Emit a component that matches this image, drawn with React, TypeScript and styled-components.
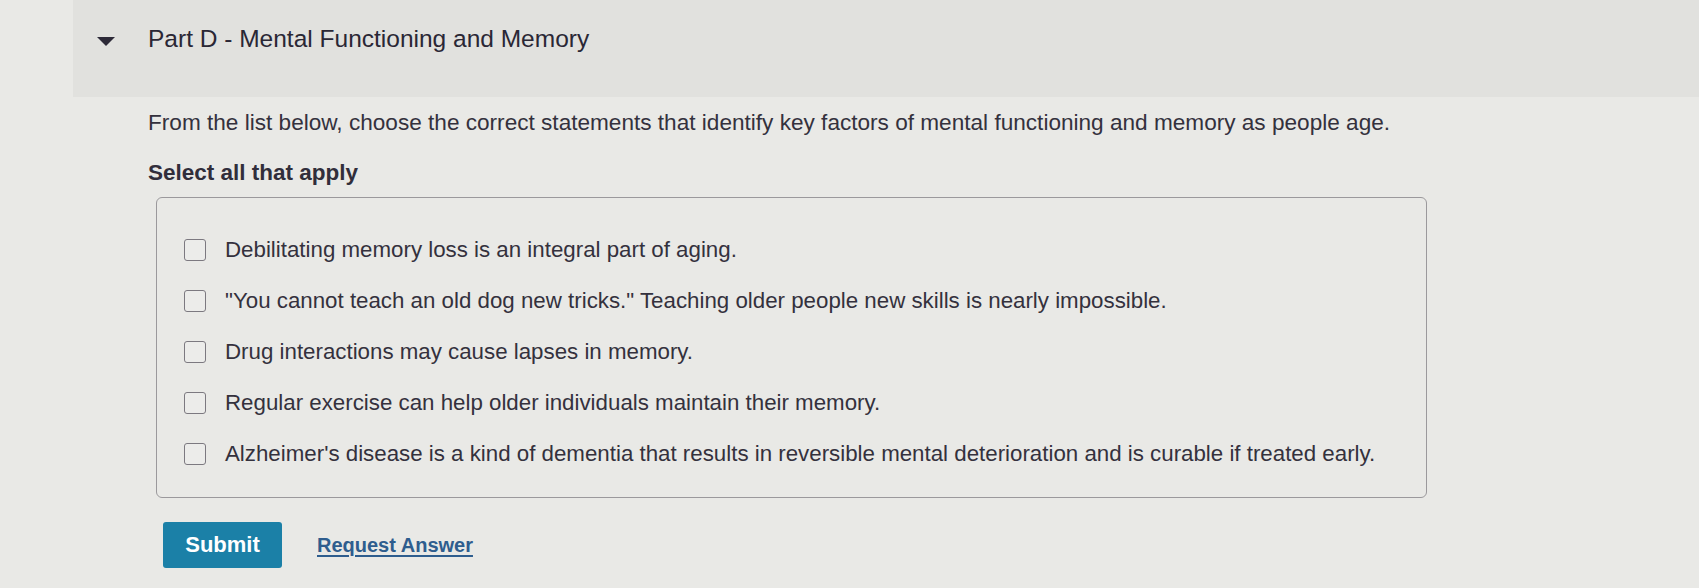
import React from 'react'
import styled, { createGlobalStyle } from 'styled-components'

const GlobalStyle = createGlobalStyle`
  html, body {
    margin: 0;
    padding: 0;
    background: #e9e9e6;
  }
  body {
    font-family: "Liberation Sans", Arial, Helvetica, sans-serif;
    color: #34313d;
  }
`

const Page = styled.div`
  width: 1699px;
  height: 588px;
  overflow: hidden;
`

const PartHeader = styled.div`
  margin-left: 73px;
  height: 97px;
  background: #e1e1de;
  display: flex;
  align-items: flex-start;
  padding: 25px 0 0 24px;
  box-sizing: border-box;
`

const Caret = styled.svg`
  width: 18px;
  height: 9px;
  margin-top: 12px;
  margin-right: 33px;
  flex-shrink: 0;
`

const PartTitle = styled.h2`
  margin: 0;
  font-size: 24.5px;
  line-height: 28px;
  font-weight: 400;
  color: #2a2735;
`

const Content = styled.div`
  padding: 12px 0 0 148px;
`

const Prompt = styled.p`
  margin: 0;
  font-size: 22.6px;
  line-height: 28px;
`

const Instruction = styled.div`
  margin-top: 23px;
  font-size: 22.5px;
  line-height: 26px;
  font-weight: 700;
  color: #312e3b;
`

const OptionBox = styled.div`
  margin: 11px 0 0 8px;
  width: 1271px;
  box-sizing: border-box;
  border: 1px solid #9b999c;
  border-radius: 6px;
  padding: 38px 0 29px 27px;
  display: flex;
  flex-direction: column;
  gap: 23px;
`

const Option = styled.label`
  display: flex;
  align-items: center;
  gap: 19px;
  min-height: 28px;
  font-size: 22.3px;
  line-height: 28px;
  cursor: pointer;
`

const Check = styled.span`
  width: 22px;
  height: 22px;
  box-sizing: border-box;
  border: 1.5px solid #7c7980;
  border-radius: 3px;
  background: #ececea;
  flex-shrink: 0;
`

const Actions = styled.div`
  display: flex;
  align-items: center;
  gap: 35px;
  margin: 24px 0 0 15px;
`

const SubmitButton = styled.button`
  width: 119px;
  height: 46px;
  border: none;
  border-radius: 3px;
  background: #1b80a7;
  color: #ffffff;
  font-family: "Liberation Sans", Arial, sans-serif;
  font-size: 22px;
  font-weight: 700;
  cursor: pointer;
`

const RequestLink = styled.a`
  font-size: 20px;
  font-weight: 700;
  color: #2e5d8e;
  text-decoration: underline;
  text-underline-offset: 3px;
  cursor: pointer;
`

const options = [
  'Debilitating memory loss is an integral part of aging.',
  '"You cannot teach an old dog new tricks." Teaching older people new skills is nearly impossible.',
  'Drug interactions may cause lapses in memory.',
  'Regular exercise can help older individuals maintain their memory.',
  "Alzheimer's disease is a kind of dementia that results in reversible mental deterioration and is curable if treated early.",
]

export default function App() {
  return (
    <Page>
      <GlobalStyle />
      <PartHeader>
        <Caret viewBox="0 0 18 9">
          <path d="M0 0 H18 L9 9 Z" fill="#2d2a38" />
        </Caret>
        <PartTitle>Part D - Mental Functioning and Memory</PartTitle>
      </PartHeader>

      <Content>
        <Prompt>
          From the list below, choose the correct statements that identify key factors of mental
          functioning and memory as people age.
        </Prompt>
        <Instruction>Select all that apply</Instruction>

        <OptionBox>
          {options.map(text => (
            <Option key={text}>
              <Check />
              {text}
            </Option>
          ))}
        </OptionBox>

        <Actions>
          <SubmitButton>Submit</SubmitButton>
          <RequestLink>Request Answer</RequestLink>
        </Actions>
      </Content>
    </Page>
  )
}
